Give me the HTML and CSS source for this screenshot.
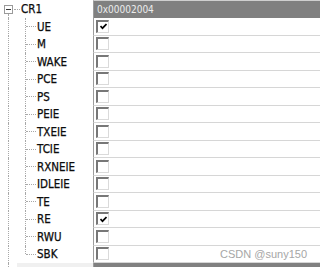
FILE: index.html
```html
<!DOCTYPE html>
<html lang="en">
<head>
    <meta charset="UTF-8">
    <meta name="viewport" content="width=device-width, initial-scale=1.0">
    <title>CR1 register</title>
    <link rel="stylesheet" href="styles.css">
</head>
<body>
    <div class="grid">
        <div class="row head">
            <div class="name">
                <div class="expander">
                    <span class="box"><span class="minus"></span></span>
                    <span class="tail"></span>
                </div>
                <span class="stub"></span>
                <span class="label">CR1</span>
            </div>
            <div class="value">0x00002004</div>
        </div>

        <div class="row">
            <div class="name"><span class="rail"></span><span class="rail2"></span><span class="branch"></span><span class="label">UE</span></div>
            <div class="value"><span class="check on"><svg width="7" height="7" viewBox="0 0 7 7"><polyline points="0.5,3 2.5,5.2 6.5,1" /></svg></span></div>
        </div>
        <div class="row">
            <div class="name"><span class="rail"></span><span class="rail2"></span><span class="branch"></span><span class="label">M</span></div>
            <div class="value"><span class="check"></span></div>
        </div>
        <div class="row">
            <div class="name"><span class="rail"></span><span class="rail2"></span><span class="branch"></span><span class="label">WAKE</span></div>
            <div class="value"><span class="check"></span></div>
        </div>
        <div class="row">
            <div class="name"><span class="rail"></span><span class="rail2"></span><span class="branch"></span><span class="label">PCE</span></div>
            <div class="value"><span class="check"></span></div>
        </div>
        <div class="row">
            <div class="name"><span class="rail"></span><span class="rail2"></span><span class="branch"></span><span class="label">PS</span></div>
            <div class="value"><span class="check"></span></div>
        </div>
        <div class="row">
            <div class="name"><span class="rail"></span><span class="rail2"></span><span class="branch"></span><span class="label">PEIE</span></div>
            <div class="value"><span class="check"></span></div>
        </div>
        <div class="row">
            <div class="name"><span class="rail"></span><span class="rail2"></span><span class="branch"></span><span class="label">TXEIE</span></div>
            <div class="value"><span class="check"></span></div>
        </div>
        <div class="row">
            <div class="name"><span class="rail"></span><span class="rail2"></span><span class="branch"></span><span class="label">TCIE</span></div>
            <div class="value"><span class="check"></span></div>
        </div>
        <div class="row">
            <div class="name"><span class="rail"></span><span class="rail2"></span><span class="branch"></span><span class="label">RXNEIE</span></div>
            <div class="value"><span class="check"></span></div>
        </div>
        <div class="row">
            <div class="name"><span class="rail"></span><span class="rail2"></span><span class="branch"></span><span class="label">IDLEIE</span></div>
            <div class="value"><span class="check"></span></div>
        </div>
        <div class="row">
            <div class="name"><span class="rail"></span><span class="rail2"></span><span class="branch"></span><span class="label">TE</span></div>
            <div class="value"><span class="check"></span></div>
        </div>
        <div class="row">
            <div class="name"><span class="rail"></span><span class="rail2"></span><span class="branch"></span><span class="label">RE</span></div>
            <div class="value"><span class="check on"><svg width="7" height="7" viewBox="0 0 7 7"><polyline points="0.5,3 2.5,5.2 6.5,1" /></svg></span></div>
        </div>
        <div class="row">
            <div class="name"><span class="rail"></span><span class="rail2"></span><span class="branch"></span><span class="label">RWU</span></div>
            <div class="value"><span class="check"></span></div>
        </div>
        <div class="row last">
            <div class="name"><span class="rail"></span><span class="rail2"></span><span class="branch"></span><span class="label">SBK</span></div>
            <div class="value"><span class="check"></span><span class="watermark">CSDN @suny150</span></div>
        </div>

        <div class="row foot">
            <div class="name"><span class="rail"></span><span class="foot-fill"></span></div>
            <div class="value"></div>
        </div>
    </div>
</body>
</html>
```

FILE: styles.css
```css
*{
    margin: 0px;
    padding: 0px;
    box-sizing: border-box;
}

body{
    background-color: #FFF;
    font-family: "DejaVu Sans Condensed", "DejaVu Sans", sans-serif;
    font-stretch: condensed;
    overflow: hidden;
}

.grid{
    width: 320px;
    display: flex;
    flex-direction: column;
}

.row{
    display: flex;
    height: 17.5px;
}

.name{
    width: 93px;
    display: flex;
    align-items: stretch;
}

.value{
    flex: 1;
    display: flex;
    align-items: center;
    border-left: 1px solid #9c9c9c;
    border-bottom: 1px solid #d6d6d6;
    padding-left: 2px;
}

.label{
    align-self: center;
    font-size: 11.5px;
    color: #0c0c0c;
    -webkit-text-stroke: 0.25px #0c0c0c;
    margin-left: 1px;
}

/* tree lines */
.rail{
    width: 9px;
    border-right: 1px dotted #a8a8a8;
}

.rail2{
    width: 17px;
    border-right: 1px dotted #a8a8a8;
}

.last .rail2{
    height: 50%;
}

.branch{
    width: 10px;
    align-self: center;
    border-top: 1px dotted #a8a8a8;
}

/* header row */
.head{
    height: 18px;
}

.head .value{
    background-color: #808080;
    border-top: 1px solid #cfcfcf;
    border-bottom: 0px;
    color: #ececec;
    font-size: 10px;
    padding-left: 3px;
}

.expander{
    width: 14px;
    padding: 5px 0px 0px 4px;
    display: flex;
    flex-direction: column;
}

.box{
    width: 9px;
    height: 9px;
    border: 1px solid #9a9a9a;
    display: flex;
    align-items: center;
    justify-content: center;
    background-color: #FFF;
}

.minus{
    width: 5px;
    height: 1px;
    background-color: #3a3a3a;
}

.tail{
    flex: 1;
    width: 5px;
    border-right: 1px dotted #a8a8a8;
}

.stub{
    width: 6px;
    align-self: center;
    border-top: 1px dotted #a8a8a8;
}

/* checkbox */
.check{
    width: 13px;
    height: 13px;
    border-style: solid;
    border-width: 2px 1px 1px 2px;
    border-color: #777 #dadada #dadada #777;
    background-color: #FFF;
    display: flex;
    align-items: center;
    justify-content: center;
}

.check svg polyline{
    fill: none;
    stroke: #000;
    stroke-width: 1.7;
}

.watermark{
    margin-left: auto;
    margin-right: 13px;
    font-family: "Liberation Sans", Arial, sans-serif;
    font-size: 11px;
    color: #a6a6a6;
}

/* bottom strip */
.foot{
    height: 4px;
}

.foot .value{
    background-color: #808080;
    border-bottom: 0px;
}

.foot-fill{
    flex: 1;
    margin-left: 8px;
    background-color: #f0f0f0;
}
```
